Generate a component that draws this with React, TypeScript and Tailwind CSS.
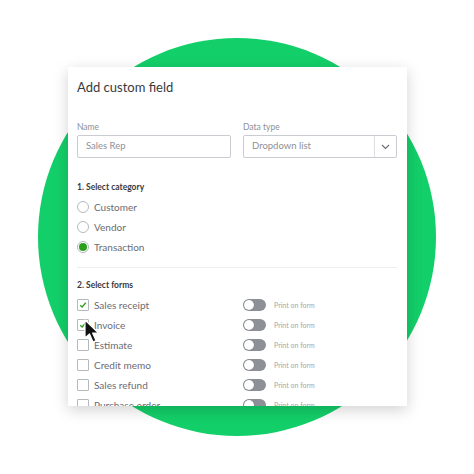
import React from "react";

const forms = [
  { label: "Sales receipt", checked: true },
  { label: "Invoice", checked: true },
  { label: "Estimate", checked: false },
  { label: "Credit memo", checked: false },
  { label: "Sales refund", checked: false },
  { label: "Purchase order", checked: false },
];

const categories = ["Customer", "Vendor", "Transaction"];

function Radio({ on }: { on: boolean }) {
  return (
    <span className="w-[12px] h-[12px] rounded-full border border-[#b5b8bd] bg-white flex items-center justify-center shrink-0">
      {on && <span className="w-[8px] h-[8px] rounded-full bg-[#2ca01c]" />}
    </span>
  );
}

function Checkbox({ on }: { on: boolean }) {
  return (
    <span className="w-[12px] h-[12px] border border-[#b5b8bd] rounded-[1px] bg-white flex items-center justify-center shrink-0">
      {on && (
        <svg width="8" height="8" viewBox="0 0 8 8">
          <path d="M1.2 4.2 L3.1 6 L6.8 1.8" fill="none" stroke="#2ca01c" strokeWidth="1.3" />
        </svg>
      )}
    </span>
  );
}

function Toggle() {
  return (
    <span className="w-[23px] h-[12px] rounded-full bg-[#8d9096] flex items-center pl-[1px] shrink-0">
      <span className="w-[10px] h-[10px] rounded-full bg-white shadow-[0_0_1px_rgba(0,0,0,0.4)]" />
    </span>
  );
}

export default function App() {
  return (
    <div className="relative w-[474px] h-[474px] bg-white overflow-hidden font-['Lato',_'Noto_Sans',_sans-serif]">
      {/* green disc behind the card */}
      <div className="absolute left-[38px] top-[38px] w-[398px] h-[398px] rounded-full bg-[#13cf69]" />

      <div className="relative ml-[68px] mt-[67px] w-[339px] h-[339px] bg-white overflow-hidden shadow-[0_4px_14px_rgba(0,0,0,0.18)] pl-[9px] pr-[10px] pt-[12px]">
        <h2 className="text-[13px] leading-[16px] text-[#393a3d]">Add custom field</h2>

        <div className="mt-[26px] flex gap-[12px]">
          <div className="w-[154px]">
            <p className="text-[8.5px] leading-[12px] text-[#8d9096]">Name</p>
            <div className="mt-[2px] h-[23px] border border-[#c9ccd0] rounded-[2px] flex items-center pl-[8px] text-[9.5px] text-[#8d9096]">
              Sales Rep
            </div>
          </div>
          <div className="w-[154px]">
            <p className="text-[8.5px] leading-[12px] text-[#8d9096]">Data type</p>
            <div className="mt-[2px] h-[23px] border border-[#c9ccd0] rounded-[2px] flex items-center text-[9.5px] text-[#8d9096]">
              <span className="flex-1 pl-[8px]">Dropdown list</span>
              <span className="w-[22px] h-full border-l border-[#dcdee1] flex items-center justify-center">
                <svg width="9" height="6" viewBox="0 0 9 6">
                  <path d="M1 1 L4.5 4.5 L8 1" fill="none" stroke="#6b6c72" strokeWidth="1.1" />
                </svg>
              </span>
            </div>
          </div>
        </div>

        <p className="mt-[23px] text-[8.5px] leading-[12px] font-bold text-[#393a3d]">1. Select category</p>
        <div className="mt-[4px]">
          {categories.map((c) => (
            <div key={c} className="h-[20px] flex items-center gap-[5px]">
              <Radio on={c === "Transaction"} />
              <span className="text-[10px] text-[#6b6c72]">{c}</span>
            </div>
          ))}
        </div>

        <div className="mt-[10px] h-px bg-[#eceef1]" />

        <p className="mt-[11px] text-[8.5px] leading-[12px] font-bold text-[#393a3d]">2. Select forms</p>
        <div className="mt-[4px]">
          {forms.map((f) => (
            <div key={f.label} className="h-[20px] flex items-center">
              <div className="w-[166px] flex items-center gap-[5px]">
                <Checkbox on={f.checked} />
                <span className="text-[10px] text-[#6b6c72]">{f.label}</span>
              </div>
              <Toggle />
              <span className="ml-[8px] text-[7px] text-[#a4a6aa]">Print on form</span>
            </div>
          ))}
        </div>

        {/* mouse pointer over the Invoice checkbox */}
        <svg className="absolute left-[16px] top-[252px]" width="18" height="26" viewBox="0 0 18 26">
          <path d="M1 1 L1 19 L5.5 15 L9 23 L12 21.6 L8.6 14 L14.5 14 Z" fill="#111" stroke="#fff" strokeWidth="1.2" strokeLinejoin="round" />
        </svg>
      </div>
    </div>
  );
}
